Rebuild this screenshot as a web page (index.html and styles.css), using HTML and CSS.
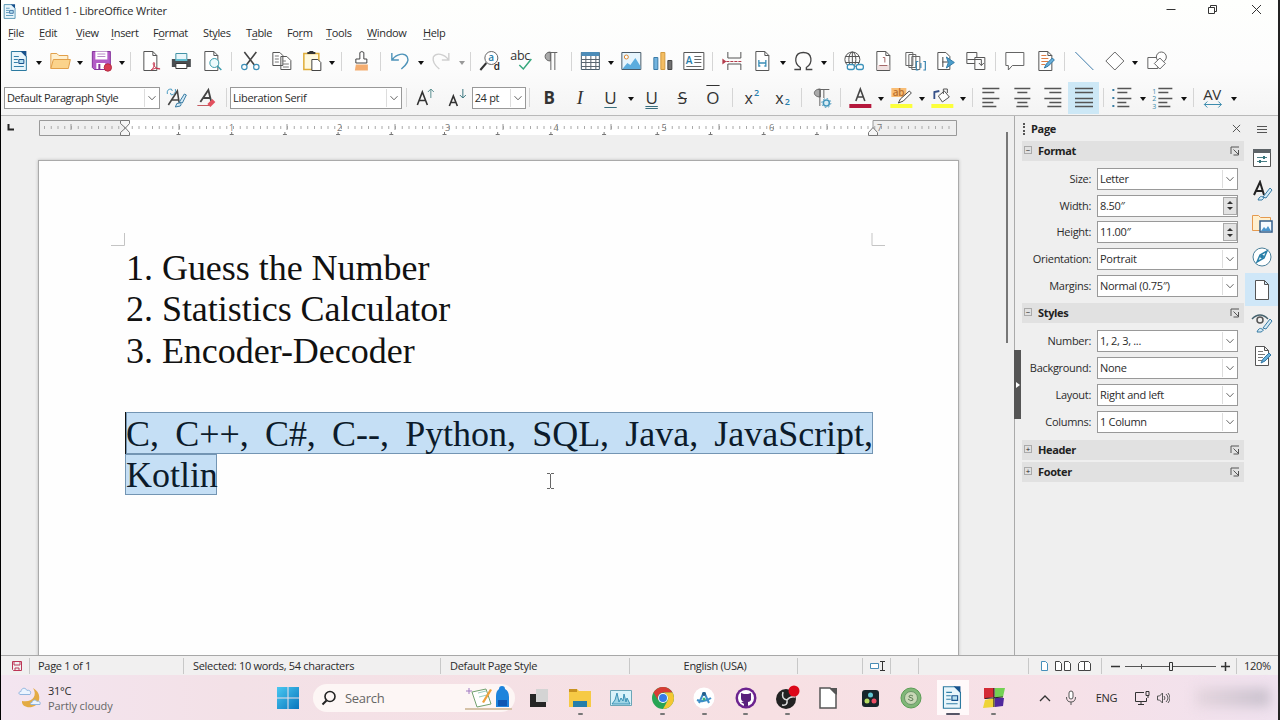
FILE: index.html
```html
<!DOCTYPE html>
<html lang="en">
<head>
<meta charset="utf-8">
<title>Untitled 1 - LibreOffice Writer</title>
<link rel="stylesheet" href="styles.css">
</head>
<body>
<svg class="defs" width="0" height="0">
  <symbol id="chev" viewBox="0 0 10 10"><path d="M1.500 3.200 5 6.800 8.500 3.200" fill="none" stroke="#666"/></symbol>
  <symbol id="launch" viewBox="0 0 10 10"><path d="M1 8V1h8M3.500 3.500 8 8M8.500 4v5h-5" fill="none" stroke="#555"/></symbol>
  <symbol id="page" viewBox="0 0 22 22"><path d="M4.500 1.500h9l4 4v15h-13zM13.500 1.500v4h4" fill="#fff" stroke="#555"/></symbol>
  <symbol id="writer" viewBox="0 0 22 22"><path d="M3 1.500h10l5 5v14H3z" fill="#e8f5fb" stroke="#2c7aa0"/><path d="M12 1h6v6z" fill="#17518c"/><path d="M5.500 6.500h5M5.500 9.500h4M5.500 12.500h4M5.500 16.500h10" stroke="#327fa8"/><path d="M10.500 9.500h5v4h-5z" fill="#b5dff0" stroke="#17518c"/></symbol>
  <symbol id="pen" viewBox="0 0 22 22"><path d="m10 18 2-4 6-6 2 2-6 6z" fill="#69afd9" stroke="#3077a5"/></symbol>
</svg>
<div class="app">
  <header class="chrome">
    <div class="title">
      <svg class="logo"><use href="#writer"/></svg><span class="t-title">Untitled 1 - LibreOffice Writer</span>
      <svg class="winbtns" viewBox="0 0 110 20"><g fill="none" stroke="#333"><path d="M6.500 9.500h9M48.500 7.500h6v6h-6zM50.500 7.500v-2h6v6h-2M92 5l9 9M101 5l-9 9"/></g></svg>
    </div>
    <nav class="menu"><span><u>F</u>ile</span><span><u>E</u>dit</span><span><u>V</u>iew</span><span><u>I</u>nsert</span><span>F<u>o</u>rmat</span><span>St<u>y</u>les</span><span>T<u>a</u>ble</span><span>Fo<u>r</u>m</span><span><u>T</u>ools</span><span><u>W</u>indow</span><span><u>H</u>elp</span></nav>
    <div class="bar one">
      <svg class="i"><use href="#writer"/></svg><b class="a"></b>
      <svg class="i" viewBox="0 0 22 22"><path d="M1.500 18.500v-15h6l2 2h9v4" fill="#fff0cf" stroke="#e2a04a"/><path d="M4 9.500h17l-2 9H1.500z" fill="#fbd38b" stroke="#e2a04a"/></svg><b class="a"></b>
      <svg class="i" viewBox="0 0 22 22"><path d="M2 1.500h18v18H4l-2-2z" fill="#b35cc6" stroke="#85339b"/><path d="M5 1.500h12v8H5z" fill="#fff"/><path d="M7 4h8M7 6.500h8" stroke="#b989c7"/><path d="M6 13h9v6H6z" fill="#fff"/><path d="M8 14h2v5H8z" fill="#85339b"/><circle cx="17.500" cy="17.500" r="3.700" fill="#d83c55" stroke="#b62c44"/></svg><b class="a"></b><i class="s"></i>
      <svg class="i" viewBox="0 0 22 22"><use href="#page"/><path d="M12 20c5-5 3-9 2-7s3 6 6 6-4-2-8 1" fill="#fff" stroke="#c6314b"/></svg>
      <svg class="i" viewBox="0 0 22 22"><path d="M5.500 9V3.500h11V9" fill="#e9f6fa" stroke="#4393a6"/><path d="M1.500 9h19v8h-19z" fill="#4b4f52"/><path d="M5.500 13.500h11v5h-11z" fill="#fff" stroke="#383838"/><path d="M5 9h12v2H5z" fill="#62bdd0"/></svg>
      <svg class="i" viewBox="0 0 22 22"><use href="#page"/><circle cx="14" cy="13" r="4.500" fill="#ecfafc" stroke="#3b9dad"/><path d="m17 16 4 4" stroke="#3b9dad" stroke-width="1.500"/></svg><i class="s"></i>
      <svg class="i" viewBox="0 0 22 22"><path d="m5 2 10 13M17 2 7 15" fill="none" stroke="#444" stroke-width="1.600"/><g fill="none" stroke="#3b8fb8" stroke-width="1.200"><circle cx="5" cy="17" r="2.700"/><circle cx="17" cy="17" r="2.700"/></g></svg>
      <svg class="i" viewBox="0 0 22 22"><g fill="#fff" stroke="#555"><path d="M2.500 2.500h7l3 3v10h-10zM10.500 6.500h6l4 4v9h-10z"/></g><path d="M4.500 6h4M4.500 9h4M4.500 12h4M12.500 11h3M12.500 14h6M12.500 17h6" stroke="#777"/></svg>
      <svg class="i" viewBox="0 0 22 22"><path d="M2.500 3.500h15v16h-15z" fill="#fff9df" stroke="#e0ad37" stroke-width="1.500"/><path d="M6 4h8V2h-2V1H8v1H6z" fill="#333"/><path d="M10.500 9.500h6l3 3v8h-9z" fill="#fff" stroke="#444"/></svg><b class="a"></b><i class="s"></i>
      <svg class="i" viewBox="0 0 22 22"><path d="M9.500 9V2.500q2-2 4 0V9h3v4h-11V9z" fill="#fff" stroke="#444"/><path d="M5.500 14.500h12v6h-13z" fill="#f4ad70"/></svg><i class="s"></i>
      <svg class="i" viewBox="0 0 22 22"><path d="M2.500 3v7h7M3 9.500C7 4 15 2 18 7c2 4-1 8-6 12" fill="none" stroke="#4e93b9" stroke-width="1.400"/></svg><b class="a"></b>
      <svg class="i" viewBox="0 0 22 22"><path d="M18.500 3v7h-7M18 9.500C14 4 6 2 3 7c-1 4 1 8 6 12" fill="none" stroke="#cfcfcf" stroke-width="1.400"/></svg><b class="a dim"></b><i class="s"></i>
      <svg class="i" viewBox="0 0 22 22"><circle cx="12" cy="8" r="6.500" fill="#fff" stroke="#666"/><path d="m7 13-6 7" stroke="#333" stroke-width="2"/><text x="9" y="11" class="g" fill="#277ca8">a</text><text x="14.500" y="20" class="g" fill="#222">d</text></svg>
      <svg class="i" viewBox="0 0 22 22"><text x="0" y="10" class="g abc">abc</text><path d="m9 15 4 4 8-10" fill="none" stroke="#36a77c" stroke-width="1.500"/></svg>
      <svg class="i" viewBox="0 0 22 22"><path d="M10 2C3 2 3 11 10 11z" fill="#aaa" stroke="#666"/><path d="M10.500 20V2.500M14.500 20V2.500M8 2.500h9" stroke="#666" fill="none"/></svg><i class="s"></i>
      <svg class="i" viewBox="0 0 22 22"><path d="M2 2.500h18v17H2z" fill="#fff" stroke="#465c6b"/><path d="M2 2h18v4H2z" fill="#4c8cb8"/><path d="M2 9.500h18M2 12.500h18M2 16.500h18M6.500 6v14M11.500 6v14M16.500 6v14" stroke="#5a6670"/></svg><b class="a"></b>
      <svg class="i" viewBox="0 0 22 22"><path d="M1.500 2.500h19v17h-19z" fill="#e6f5fd" stroke="#4a5c6a"/><circle cx="6" cy="7" r="2" fill="#fff" stroke="#dc8830"/><path d="m2 19 5-6 3 2 5-7 5 8v3z" fill="#5cadde"/></svg>
      <svg class="i" viewBox="0 0 22 22"><path d="M2.500 7.500h4v12h-4z" fill="#73b4df" stroke="#3b7ba7"/><path d="M9.500 2.500h4v17h-4z" fill="#f4bd62" stroke="#d29a3f"/><path d="M16.500 10.500h4v9h-4z" fill="#707070" stroke="#444"/></svg>
      <svg class="i" viewBox="0 0 22 22"><path d="M1.500 2.500h20v17h-20z" fill="#fff" stroke="#555"/><path d="M12 6.500h7M12 9.500h7M12 12.500h7M4 16.500h15" stroke="#666"/><text x="3.500" y="14" class="g" fill="#277ca8">A</text></svg><i class="s"></i>
      <svg class="i" viewBox="0 0 22 22"><path d="M6.500 2v6h13V2M6.500 20v-6h13v6" fill="none" stroke="#555"/><path d="M5 11.500h16" stroke="#b33c4b" stroke-dasharray="3 1"/><path d="m1 8.500 4 3-4 3z" fill="#b33c4b"/></svg>
      <svg class="i" viewBox="0 0 22 22"><use href="#page"/><path d="M7.500 10v6h1.500M14.500 10v6H13M7.500 13h7" fill="none" stroke="#3c8fb8" stroke-width="1.300"/></svg><b class="a"></b>
      <svg class="i" viewBox="0 0 22 22"><path d="M2 19.500h6v-2C1 13 2 2.500 11 2.500S21 13 14 17.500v2h6" fill="none" stroke="#444" stroke-width="1.300"/></svg><b class="a"></b><i class="s"></i>
      <svg class="i" viewBox="0 0 22 22"><g fill="none" stroke="#555"><circle cx="10" cy="9.500" r="7.500"/><ellipse cx="10" cy="9.500" rx="3.500" ry="7.500"/><path d="M3 6.500h14M3 12.500h14M10 2v15"/></g><g fill="#fff" stroke="#3b92bb" stroke-width="1.300"><rect x="5" y="14.500" width="7" height="5" rx="2"/><rect x="14" y="14.500" width="7" height="5" rx="2"/></g></svg>
      <svg class="i" viewBox="0 0 22 22"><use href="#page"/><path d="M5 15h12v5H5z" fill="#f0e1e1"/><path d="M10.500 7.500h2v5M7 15.500h8" fill="none" stroke="#a46969"/></svg>
      <svg class="i" viewBox="0 0 22 22"><g fill="#fff" stroke="#666"><path d="M2.500 2.500h7v13h-7zM5.500 4.500h7v13h-7zM8.500 6.500h8v13h-8z"/></g><path d="M15 11.500h-2v8.500h2M20 11.500h2v8.500h-2M17.500 13v5" fill="none" stroke="#3d87b1" stroke-width="1.200"/></svg>
      <svg class="i" viewBox="0 0 22 22"><path d="M3.500 2.500h8l4 4v13h-12z" fill="#fff" stroke="#555"/><path d="M8.500 7v10M8 12h7" stroke="#444"/><path d="m12 7 8 5.500-8 5.500 2-5.500z" fill="#4b9dcb" stroke="#347eaa"/></svg>
      <svg class="i" viewBox="0 0 22 22"><g fill="none" stroke="#555"><path d="M2.500 2.500h10v5M10.500 13.500h-8v-11M10.500 7.500h10v12h-10zM3 9.500h14v6M14.500 13l2.500 2.500 2.500-2.500"/></g></svg><i class="s"></i>
      <svg class="i" viewBox="0 0 22 22"><path d="M2.500 2.500h18v13H9l-4 4.500v-4.500H2.500z" fill="#fff" stroke="#666"/></svg>
      <svg class="i" viewBox="0 0 22 22"><use href="#page"/><path d="M7 5.500h5M7 8.500h7M7 11.500h7M7 14.500h4" stroke="#dd7d46"/><use href="#pen"/></svg><i class="s"></i>
      <svg class="i" viewBox="0 0 22 22"><path d="m2 2 18 18" stroke="#407cab"/></svg>
      <svg class="i" viewBox="0 0 22 22"><path d="m10.500 2 9 9-9 9-9-9z" fill="#fff" stroke="#666"/></svg><b class="a"></b>
      <svg class="i" viewBox="0 0 22 22"><g fill="#fff" stroke="#666"><path d="M2.500 7.500h10v11h-10z"/><circle cx="16" cy="7" r="5"/><path d="m14.500 8 5.500 5.500-5.500 5.500-5.500-5.500z"/></g></svg>
    </div>
    <div class="bar two">
      <div class="combo w1"><span class="t-ps">Default Paragraph Style</span><svg><use href="#chev"/></svg></div>
      <svg class="i" viewBox="0 0 22 22"><path d="M2 7q-1-5 4-5l1 2M10 2q1 5-4 6L5 6" fill="none" stroke="#4d9dc3"/><path d="m3 18 9-14 2 13M6 13h7" fill="none" stroke="#444" stroke-width="1.600"/><path d="m14 15 5-8 2 1-4 8zM10 20q1-5 4-4 3 0 1 3z" fill="#d5eaf6" stroke="#397ca4"/></svg>
      <svg class="i" viewBox="0 0 22 22"><path d="m4 15 8-12 3 12M7 11h7" fill="none" stroke="#444" stroke-width="1.800"/><path d="M1 18.500h13" stroke="#c45d63"/><path d="m11 17 5-5 3 3-5 5z" fill="#e2505e"/></svg><i class="s"></i>
      <div class="combo w2"><span class="t-ls">Liberation Serif</span><svg><use href="#chev"/></svg></div><i class="s"></i>
      <svg class="i" viewBox="0 0 22 22"><path d="m3 18 5-13 5 13M5 13.500h6" fill="none" stroke="#333" stroke-width="1.600"/><path d="M16.500 11V2M13.500 5l3-3 3 3" fill="none" stroke="#5a8f90"/></svg>
      <svg class="i" viewBox="0 0 22 22"><path d="m4 19 4-10 4 10M5.500 15.500h5" fill="none" stroke="#333" stroke-width="1.600"/><path d="M17.500 2v9M14.500 8l3 3 3-3" fill="none" stroke="#3c7880"/></svg>
      <div class="combo w3"><span class="t-pt">24 pt</span><svg><use href="#chev"/></svg></div><i class="s"></i>
      <span class="i L"><strong>B</strong></span><span class="i L it">I</span><span class="i L ul">U</span><b class="a"></b><span class="i L dul">U</span><span class="i L st">S</span><span class="i L ol">O</span><i class="s"></i>
      <span class="i L x">x<sup>2</sup></span><span class="i L x">x<sub>2</sub></span><i class="s"></i>
      <svg class="i" viewBox="0 0 22 22"><path d="M10 2C2 2 2 10 10 10z" fill="#aaa" stroke="#666"/><path d="M9.500 19V2.500M13.500 11V2.500M8 2.500h11" stroke="#666"/><circle cx="16" cy="16" r="3" fill="#d8edf5" stroke="#4496bc" stroke-width="1.500"/><circle cx="16" cy="16" r="4.500" fill="none" stroke="#4496bc" stroke-dasharray="1.500 2"/></svg><i class="s"></i>
      <svg class="i" viewBox="0 0 22 22"><path d="M0 17h22v4H0z" fill="#b5173c"/><path d="m6.500 14 4.500-12 4.500 12M8 10h6" fill="none" stroke="#444" stroke-width="1.600"/></svg><b class="a"></b>
      <svg class="i" viewBox="0 0 22 22"><path d="M0 17h22v4H0z" fill="#fcff3b"/><path d="M1 1h15v9H1z" fill="#f9bd75"/><text x="2.500" y="9" class="g" fill="#b8702f">ab</text><path d="m8 16 2-4 9-8 2 2-8 8z" fill="#fff" stroke="#444"/></svg><b class="a"></b>
      <svg class="i" viewBox="0 0 22 22"><path d="M0 17h22v4H0z" fill="#fcff3b"/><path d="M3 12V5l5-1" fill="none" stroke="#344f88" stroke-width="1.800"/><path d="m7 9 6-5 5 6-7 5z" fill="#fff" stroke="#555"/><path d="M12 7V2h4v4" fill="none" stroke="#555"/></svg><b class="a"></b><i class="s"></i>
      <svg class="i" viewBox="0 0 22 22"><path class="ln" d="M2 1.500h17M2 5.500h12M2 11.500h17M2 15.500h11M2 19.500h14"/></svg>
      <svg class="i" viewBox="0 0 22 22"><path class="ln" d="M3 1.500h16M6 5.500h10M3 11.500h16M6 15.500h10M5 19.500h12"/></svg>
      <svg class="i" viewBox="0 0 22 22"><path class="ln" d="M2 1.500h17M7 5.500h12M2 11.500h17M7 15.500h12M5 19.500h14"/></svg>
      <span class="i on"><svg viewBox="0 0 22 22"><path class="ln" d="M2 1.500h18M2 5.500h18M2 11.500h18M2 15.500h18M2 19.500h18"/></svg></span><i class="s"></i>
      <svg class="i" viewBox="0 0 22 22"><path class="ln" d="M6 1.500h14M6 5.500h10M6 11.500h14M6 15.500h9M6 19.500h12"/><path d="M1 2h2v2H1zM1 10h2v2H1zM1 18h2v2H1z" fill="#3a7ea5"/></svg><b class="a"></b>
      <svg class="i" viewBox="0 0 22 22"><path class="ln" d="M6 1.500h14M6 5.500h10M6 11.500h14M6 15.500h9M6 19.500h12"/><g class="tiny" fill="#3a8bac"><text x="0" y="6.500">1</text><text x="0" y="14">2</text><text x="0" y="21.500">3</text></g></svg><b class="a"></b><i class="s"></i>
      <svg class="i" viewBox="0 0 22 22"><text x="1" y="13" class="av">AV</text><path d="M2 17.500h17M5 14.500l-3 3 3 3M16 14.500l3 3-3 3" fill="none" stroke="#3d8cae"/></svg><b class="a"></b>
    </div>
  </header>
  <main class="work">
    <section class="docpane">
      <svg class="ruler" width="1014" height="44" viewBox="0 0 1014 44">
        <path d="M8.500 8v5.500H14" fill="none" stroke="#222" stroke-width="2"/>
        <path d="M125 4h748v15H125z" fill="#fff"/>
        <path d="M39.500 4.500h85v15h-85zM873 4.500h83.500v15H873z" fill="#efefef" stroke="#999"/>
        <path d="M44 11.500H953" stroke="#aaa" stroke-width="3" stroke-dasharray="1 5.750"/>
        <path d="M70.500 11H920" stroke="#999" stroke-width="6" stroke-dasharray="1 107"/>
        <g class="nums"><text x="231.500" y="15">1</text><text x="339.500" y="15">2</text><text x="447.500" y="15">3</text><text x="556" y="15">4</text><text x="664" y="15">5</text><text x="771.500" y="15">6</text><text x="879.500" y="15">7</text></g>
        <path d="M176.500 18.500H870" stroke="#777" stroke-dasharray="4 49.200"/><path d="M178 17H870" stroke="#777" stroke-width="2" stroke-dasharray="1 52.200"/>
        <path d="M120.500 4.500h9v3l-4 4.500-5-4.500zM120.500 19.500h9v-3L125.500 12l-5 4.500z" fill="#f6f6f6" stroke="#777"/>
        <path d="M868.500 19.500h9v-3l-4.500-5-4.500 5z" fill="#f6f6f6" stroke="#777"/>
      </svg>
      <article class="sheet">
        <svg class="corners" viewBox="0 0 774 13"><path d="M0 12.500h13.500V0M774 12.500h-13V0" fill="none" stroke="#c4c4c4"/></svg>
        <p>1. Guess the Number</p><p>2. Statistics Calculator</p><p>3. Encoder-Decoder</p><p>&nbsp;</p>
        <p class="sel full">C, C++, C#, C--, Python, SQL, Java, JavaScript,</p><p class="sel last">Kotlin</p>
        <svg class="ibeam" viewBox="0 0 9 16"><path d="M1 .5h3M5 .5h3M1 15.500h3M5 15.500h3M4.500 1v14" stroke="#666" fill="none"/></svg>
      </article>
      <i class="scroll"></i>
    </section>
    <i class="grip"></i>
    <aside class="side">
      <div class="shead"><i class="dots"></i><strong>Page</strong><svg viewBox="0 0 10 10"><path d="m1 1 8 8M9 1 1 9" stroke="#444" fill="none"/></svg></div>
      <h3 class="sec"><i>−</i><span>Format</span><svg><use href="#launch"/></svg></h3>
      <div class="rows">
        <label>Size:</label><div class="combo"><span>Letter</span><svg><use href="#chev"/></svg></div>
        <label>Width:</label><div class="combo"><span>8.50″</span><em class="spin"></em></div>
        <label>Height:</label><div class="combo"><span>11.00″</span><em class="spin"></em></div>
        <label>Orientation:</label><div class="combo"><span>Portrait</span><svg><use href="#chev"/></svg></div>
        <label>Margins:</label><div class="combo"><span>Normal (0.75″)</span><svg><use href="#chev"/></svg></div>
      </div>
      <h3 class="sec"><i>−</i><span>Styles</span><svg><use href="#launch"/></svg></h3>
      <div class="rows r2">
        <label>Number:</label><div class="combo"><span>1, 2, 3, ...</span><svg><use href="#chev"/></svg></div>
        <label>Background:</label><div class="combo"><span>None</span><svg><use href="#chev"/></svg></div>
        <label>Layout:</label><div class="combo"><span>Right and left</span><svg><use href="#chev"/></svg></div>
        <label>Columns:</label><div class="combo"><span>1 Column</span><svg><use href="#chev"/></svg></div>
      </div>
      <h3 class="sec"><i>+</i><span>Header</span><svg><use href="#launch"/></svg></h3>
      <h3 class="sec foot"><i>+</i><span>Footer</span><svg><use href="#launch"/></svg></h3>
    </aside>
    <nav class="tabs">
      <span><svg viewBox="0 0 22 22"><path d="M6 8.500h10M6 11.500h10M6 14.500h10" stroke="#555"/></svg></span>
      <span><svg viewBox="0 0 22 22"><path d="M2.500 2.500h17v17h-17z" fill="#fff" stroke="#555"/><path d="M2 2h18v4H2z" fill="#5e6468"/><path d="M6 10.500h10M6 14.500h10" stroke="#4b7f86"/><path d="M12 9h2v3h-2zM8 13h2v3H8z" fill="#37757c"/></svg></span>
      <span><svg viewBox="0 0 22 22"><path d="m3 15 6-13 4 13M5 11h7" fill="none" stroke="#222" stroke-width="2"/><path d="m12 17 7-9 2 2-6 8zM7 20q2-5 5-3 2 1-1 3z" fill="#d5eaf6" stroke="#397ca4"/></svg></span>
      <span><svg viewBox="0 0 22 22"><path d="M1.500 17.500v-15h6l2 2h10v13z" fill="#fff0cf" stroke="#e59a4f"/><path d="M9 8h12v11H9z" fill="#f7fbff" stroke="#355f8b" stroke-width="1.500"/><path d="m10 18 3-4 2 2 2-3 3 5z" fill="#4b96ce"/></svg></span>
      <span><svg viewBox="0 0 22 22"><circle cx="11" cy="11" r="9" fill="#fff" stroke="#4a7f99"/><path d="m6 16 3-7 7-4-3 7z" fill="#fff" stroke="#287fa8" stroke-width="1.500"/><circle cx="11" cy="10.500" r="2" fill="#287fa8"/></svg></span>
      <span class="cur"><svg><use href="#page"/></svg></span>
      <span><svg viewBox="0 0 22 22"><path d="M1 7q8-8 16 0" fill="none" stroke="#44616d" stroke-width="1.500"/><circle cx="9" cy="8" r="3" fill="none" stroke="#555" stroke-width="1.500"/><path d="m12 16 7-9 2 2-6 8zM6 20q2-5 5-3 3 1-1 3z" fill="#d5eaf6" stroke="#397ca4"/></svg></span>
      <span><svg viewBox="0 0 22 22"><use href="#page"/><path d="M7 6.500h5M7 9.500h7M7 12.500h5M7 15.500h4" stroke="#777"/><use href="#pen"/></svg></span>
    </nav>
  </main>
  <footer class="status">
    <span class="c1"><svg viewBox="0 0 12 12"><path d="M1.500 1.500h9v9h-8l-1-1zM3 2v3h6V2M4 11V8h4v3" fill="none" stroke="#bc3656"/></svg></span>
    <span class="c2">Page 1 of 1</span><span class="c3">Selected: 10 words, 54 characters</span><span class="c4">Default Page Style</span><span class="c5">English (USA)</span><span class="c6"></span>
    <span class="c7"><svg viewBox="0 0 18 12"><path d="M1.500 3.500h8v5h-8z" fill="#fff" stroke="#498cb5"/><path d="M11 1.500h5M11 10.500h5M13.500 2v9" stroke="#333" fill="none"/></svg></span><span class="c8"></span><span class="c9"></span>
    <span class="c10"><svg viewBox="0 0 54 12"><g fill="#fff" stroke="#444"><path stroke="#468fba" d="M1.500 1.500h4l2 2v7h-6z"/><path d="M15.500 1.500h4l2 2v7h-6zM24.500 1.500h4l2 2v7h-6zM38.500 10.500v-7l2-2h4v9zM44.500 1.500h4l2 2v7h-6z"/></g></svg></span>
    <span class="c11"><svg viewBox="0 0 124 12"><path d="M2 6.500h9M112 6.500h9M116.500 2v9" stroke="#333" stroke-width="1.500"/><path d="M16 6.500h91M32.500 4v5" stroke="#555"/><path d="M60.500 2.500h3v8h-3z" fill="#eee" stroke="#333"/></svg></span><span class="c12">120%</span>
  </footer>
  <footer class="task">
    <div class="weather"><svg viewBox="0 0 24 24"><path d="M15 2c5 8-1 15-11 13-1 8 15 9 17-1 1-5-1-9-6-12" fill="#e3ab43"/><path d="M2 8.500h10c2-3-1-5-3-4-2-4-6-2-6 1-2 0-3 2-1 3M13 18.500h9c1-3-2-4-3-3-2-3-5-1-5 1-2 0-2 1-1 2" fill="#eaf4ff" stroke="#90b5df"/></svg><div><span>31°C</span><span class="cloudy">Partly cloudy</span></div></div>
    <svg class="start" viewBox="0 0 22 22"><defs><linearGradient id="w" x1="0" y1="0" x2="1" y2="1"><stop stop-color="#4ac8f1"/><stop offset="1" stop-color="#0875bd"/></linearGradient></defs><path d="M0 0h10.500v10.500H0zM11.500 0H22v10.500H11.500zM0 11.500h10.500V22H0zM11.500 11.500H22V22H11.500z" fill="url(#w)"/></svg>
    <div class="search"><svg viewBox="0 0 16 16"><circle cx="9" cy="6.500" r="5" fill="none" stroke="#222" stroke-width="1.600"/><path d="m5.500 10.500-4 4" stroke="#222" stroke-width="2"/></svg><span>Search</span>
      <svg class="decor" viewBox="0 0 50 28"><path d="M0 24h47v2H0z" fill="#d6c2a8"/><path d="m7 8 14-3 5 15-14 3z" fill="#fff" stroke="#72a16f"/><path d="m13 9 8-2M14 13l8-2" stroke="#9cb"/><path d="m17 18 8-13 2 1-8 13z" fill="#efa13c"/><path d="M4 4v6M1 7h6" stroke="#a17ac2"/><path d="M34 5q0-3 3-3t3 3q4 2 4 8v10H31V12q0-5 3-7z" fill="#1d83dc"/><path d="M33 16h9v6h-9z" fill="#0e57b3"/></svg></div>
    <div class="apps">
      <span><svg viewBox="0 0 22 22"><path d="M8 2h12v13H8z" fill="#d4d4d4"/><path d="M2 7h6v8h10v5H2z" fill="#262626"/></svg></span>
      <span class="run"><svg viewBox="0 0 22 22"><path d="M0 2h8l2 2h12v16H0z" fill="#f6ca45"/><path d="M0 2h8v3H0z" fill="#c89220"/><path d="M4 14h14v6H4z" fill="#257eaa"/></svg></span>
      <span><svg viewBox="0 0 22 22"><path d="M.5 3.500h21v15H.5z" fill="#d9f3fa" stroke="#6ba5b7"/><path d="M2 17l3-4 2-7 2 9 2-4 2 3 1-7 2 8 1-4 3 6z" fill="#9ed4e5" stroke="#3a91b5"/></svg></span>
      <span class="run"><svg viewBox="0 0 22 22"><circle cx="11" cy="11" r="11" fill="#27a454"/><path d="M1.500 5.500A11 11 0 0 1 20.500 5.500H11A5.500 5.500 0 0 0 6 13z" fill="#d83c35"/><path d="M20.500 5.500A11 11 0 0 1 11 22l5-9q1-5-4-7.500z" fill="#f5c632"/><circle cx="11" cy="11" r="5" fill="#fff"/><circle cx="11" cy="11" r="4" fill="#367be8"/></svg></span>
      <span class="run"><svg viewBox="0 0 22 22"><circle cx="11" cy="11" r="10.500" fill="#fff"/><path d="m6 16 4.500-10h1L16 16M4 13q7 3 14-2" fill="none" stroke="#3d8dc7" stroke-width="2"/><circle cx="11" cy="7" r="2" fill="#255e8a"/><circle cx="11" cy="12" r="1.500" fill="#38b579"/></svg></span>
      <span class="run"><svg viewBox="0 0 22 22"><circle cx="11" cy="11" r="10.500" fill="#6c238f"/><circle cx="11" cy="11" r="8" fill="#fff"/><path d="M6 6l3 1h4l3-1v7q-1 2-3 2v4H9v-2l-3-2 3 0V15q-3-1-3-4z" fill="#59207c"/></svg></span>
      <span class="run"><svg viewBox="0 0 22 22"><circle cx="10" cy="12" r="10" fill="#222"/><path d="M7 5q-2 7 4 8M19 10q-5-1-8 3M6 18q6 1 5-5" fill="none" stroke="#ddd" stroke-width="1.500"/><circle cx="18" cy="4" r="5.500" fill="#dc0719"/></svg></span>
      <span><svg viewBox="0 0 22 22"><path d="M3 1h10l6 6v14H3z" fill="#fff" stroke="#555" stroke-width="1.500"/><path d="M13 1h7v7z" fill="#555"/></svg></span>
      <span><svg viewBox="0 0 22 22"><rect x="3" y="3" width="17" height="17" rx="3" fill="#17252b"/><circle cx="11.500" cy="8" r="2.500" fill="#61c5d2"/><circle cx="8" cy="14" r="2.500" fill="#b7dc62"/><circle cx="15" cy="14" r="2.500" fill="#ec4d64"/></svg></span>
      <span><svg viewBox="0 0 22 22"><circle cx="11" cy="11" r="10" fill="#81b778" stroke="#5a9d55"/><circle cx="11" cy="11" r="6.500" fill="#c9d8b7" stroke="#6b9568"/><path d="M13 9q-4-2-4 1 5 1 4 3-2 2-5-1" fill="none" stroke="#607e59"/></svg></span>
      <span class="active"><svg class="big"><use href="#writer"/></svg></span>
      <span class="run"><svg viewBox="0 0 22 22"><path d="M1 1h10v9l-10 2z" fill="#d42b35"/><path d="M12 1h10l-2 9h-8z" fill="#73d153"/><path d="m2 13 9-2v9L0 21z" fill="#eed438"/><path d="M12 11h9l-1 8-8 1z" fill="#50279c"/><path d="M11 1v19M2 11.500 20 10" stroke="#252525" stroke-width="1.200"/></svg></span>
    </div>
    <div class="tray"><svg viewBox="0 0 12 12"><path d="m1 9 5-5 5 5" fill="none" stroke="#333" stroke-width="1.300"/></svg><svg class="mic" viewBox="0 0 12 16"><rect x="4" y="1" width="4" height="8" rx="2" fill="#fff" stroke="#555"/><path d="M1.500 7q0 5 4.500 5t4.500-5M6 12v3" fill="none" stroke="#555"/></svg><span>ENG</span><svg class="net" viewBox="0 0 16 16"><path d="M10 2.500H1.500v9h11V8M4 14.500h6M7 12v2M14 8V5M12 1.500h3v4h-3z" fill="none" stroke="#333"/></svg><svg class="vol" viewBox="0 0 14 14"><path d="M1.500 5h2l3-3v10l-3-3h-2zM8 5q2 2 0 4M10 3q4 4 0 8M12 2q4 5 0 10" fill="none" stroke="#555"/></svg><i class="clock"></i></div>
  </footer>
</div>
</body>
</html>
```
FILE: styles.css
```css
* { box-sizing: border-box; }
body { margin: 0; width: 1280px; height: 720px; overflow: hidden; background: #efefef; color: #2b2b2b; font: 11px/14px "Open Sans", "Noto Sans", sans-serif; letter-spacing: -.3px; }
.defs { position: absolute; }
.app { display: flex; flex-direction: column; height: 720px; border-left: 1px solid #000; border-right: 2px solid #222; }
.chrome { height: 116px; flex: none; background: linear-gradient(#fefffd 0, #fcfcfc 60%, #f4f4f4 100%); border-bottom: 1px solid #b9b9b9; }
.title { height: 22px; display: flex; align-items: center; padding-left: 1px; }
.t-title { letter-spacing: -.18px; }
.logo { width: 16px; height: 17px; margin-right: 4px; }
.winbtns { width: 110px; height: 20px; margin: -2px 8px 0 auto; }
.menu { height: 22px; display: grid; grid-template-columns: 31px 37px 35px 42px 50px 43px 41px 39px 41px 56px 50px; align-items: center; padding-left: 7px; letter-spacing: -.35px; }
.menu u { text-underline-offset: 2px; text-decoration-color: #777; }
.bar { display: flex; align-items: center; padding-left: 2px; }
.one { height: 34px; padding-left: 2.500px; }
.two { height: 37px; padding-left: 3px; margin-top: 1px; }
.bar > .i { width: 30.7px; height: 22px; flex: none; overflow: visible; }
.a { width: 10.4px; flex: none; display: flex; justify-content: center; }
.a::after { content: ""; border: 3px solid transparent; border-top: 4px solid #111; border-bottom: 0; margin-top: 3px; }
.a.dim::after { border-top-color: #999; }
.s { width: 8.2px; height: 19px; flex: none; display: flex; justify-content: center; }
.s::after { content: ""; width: 1px; background: #d5d5d5; }
.g { font-size: 10px; font-weight: 600; }
.abc { font-size: 12.5px; fill: #333; font-weight: 400; }
.tiny { font-size: 7px; }
.av { font-size: 15px; fill: #333; letter-spacing: -.5px; }
.ln { stroke: #555; fill: none; stroke-width: 1.300; }
.combo { height: 22px; display: flex; align-items: center; background: #fff; border: 1px solid #999; padding-left: 2px; white-space: nowrap; }
.combo svg { width: 15px; height: 18px; padding: 0 2px; border-left: 1px solid #ddd; margin-left: auto; flex: none; }
.w1 { width: 156px; margin-right: 1.300px; }
.t-ps { letter-spacing: -.42px; }
.w2 { width: 172px; margin-left: -.8px; }
.w3 { width: 54px; }
.L { display: flex; justify-content: center; align-items: center; font-size: 17px; color: #333; letter-spacing: 0; }
.it { font-family: "Liberation Serif", serif; font-style: italic; font-size: 19px; }
.ul { text-decoration: underline; text-decoration-color: #386d7d; text-underline-offset: 3px; text-decoration-thickness: 1px; }
.dul { text-decoration: underline double #386d7d; text-underline-offset: 2px; text-decoration-thickness: 1px; }
.st { text-decoration: line-through; text-decoration-thickness: 1px; }
.ol { text-decoration: overline; text-decoration-thickness: 1px; }
.x { font-size: 16px; }
.x sup, .x sub { font-size: 9px; color: #287fae; margin-left: 1px; font-weight: 600; }
.x sup { margin-top: -9px; }
.x sub { margin-top: 9px; }
.bar > .on { height: 32px; background: #cde8f6; display: flex; align-items: center; justify-content: center; }
.on svg { width: 22px; height: 22px; }
.work { height: 539px; flex: none; display: grid; grid-template-columns: 1014px 6px 223px 1fr; }
.docpane { position: relative; overflow: hidden; background: #efefef; border-right: 1px solid #aaa; }
.ruler { display: block; margin-left: -1px; }
.nums { font-size: 9px; fill: #777; text-anchor: middle; }
.sheet { margin-left: 37px; width: 921px; height: 500px; padding: 72px 86px 0; background: #fefefe; border: 1px solid #aaa; box-shadow: 0 0 3px #bbb; font: 36px/41.4px "Liberation Serif", serif; letter-spacing: -.03px; color: #111; position: relative; }
.sheet p { margin: 0; padding-left: 1px; white-space: nowrap; width: 748px; }
.corners { display: block; width: 774px; height: 13px; margin: 0 0 2px -14px; }
.sheet .sel { background: #c5dff5; color: #0c1b2b; box-shadow: inset 0 0 0 1px #7395b3; height: 41.4px; padding-top: 1.400px; }
.sheet .full { text-align: justify; text-align-last: justify; border-left: 1px solid #111; padding-left: 0; margin-top: -1.400px; }
.sheet .last { width: 92px; }
.ibeam { position: absolute; left: 507px; top: 312px; width: 9px; height: 16px; }
.scroll { position: absolute; left: 1005px; top: 16px; width: 2px; height: 211px; background: #777; }
.grip { height: 69px; margin: 234px 0 0 -1px; background: #555; display: flex; align-items: center; justify-content: center; position: relative; }
.grip::after { content: ""; border: 3px solid transparent; border-left: 4px solid #fff; border-right: 0; }
.side { padding-left: 1px; }
.shead { height: 25px; display: flex; align-items: center; padding: 0 3px 0 1px; color: #222; }
.dots { height: 12px; border-left: 2px dotted #555; margin-right: 6px; }
.shead svg { width: 9px; height: 9px; margin-left: auto; }
.sec { height: 20px; margin: 0; display: flex; align-items: center; background: #e1e1e1; font: 700 11px/14px "Open Sans", sans-serif; letter-spacing: -.35px; padding: 0 4px 0 2px; color: #222; }
.sec i { width: 8px; height: 8px; border: 1px solid #aaa; font: 8px/5px "Open Sans", sans-serif; letter-spacing: 0; margin: -2px 6px 0 0; text-align: center; }
.sec svg { width: 10px; height: 10px; margin-left: auto; }
.rows { height: 142px; padding: 7px 6px 0 0; display: grid; grid-template-columns: 68px 141px; column-gap: 6px; justify-content: end; grid-auto-rows: 26.7px; align-items: start; text-align: right; }
.rows label { line-height: 21px; white-space: nowrap; }
.rows .combo { text-align: left; }
.r2 { height: 117px; grid-auto-rows: 27.1px; }
.spin { margin-left: auto; width: 14px; height: 18px; font-size: 0; background: #e3e3e3; border: 1px solid #aaa; display: flex; flex-direction: column; align-items: center; justify-content: space-evenly; }
.spin::before, .spin::after { content: ""; border: 3px solid transparent; border-top: 0; border-bottom: 3px solid #333; }
.spin::after { border-top: 3px solid #333; border-bottom: 0; }
.foot { margin-top: 2px; }
.tabs { display: flex; flex-direction: column; padding-left: 1px; }
.tabs span { height: 33px; display: flex; justify-content: center; align-items: center; }
.tabs span:first-child { height: 25px; }
.tabs svg { width: 22px; height: 22px; }
.tabs .cur { background: #cfe7f8; }
.status { height: 20px; flex: none; border-top: 1px solid #a8a8a8; background: #f1f0f0; display: grid; grid-template-columns: 29px 154px 257px 189px 168px 65px 28px 28px 110px 73px 135px 1fr; align-items: center; white-space: nowrap; }
.status span { height: 16px; line-height: 16px; border-right: 1px solid #c8c8c8; margin-top: 1px; display: flex; align-items: center; }
.status span:last-child { border: 0; padding-left: 7px; }
.c1 svg { width: 12px; height: 12px; margin-left: 10px; }
.status .c2 { padding-left: 8px; }
.status .c3 { padding-left: 9px; }
.status .c4 { padding-left: 9px; }
.status .c5 { justify-content: center; padding-left: 3px; }
.c7 svg { width: 18px; height: 12px; margin-left: 6px; }
.c10 svg { width: 54px; height: 12px; margin-left: 11px; }
.c11 svg { width: 124px; height: 12px; margin-left: 7px; }
.task { flex: 1; display: flex; align-items: center; background: linear-gradient(90deg, #f3e5f0 0, #f3e1e7 18%, #f7e0e3 60%, #f6e1e8 84%, #f0e2ef 100%); }
.weather { width: 276px; display: flex; align-items: center; padding-left: 17px; }
.weather svg { width: 24px; height: 24px; margin-right: 6px; }
.weather span { display: block; line-height: 15px; }
.weather .cloudy { color: #666; letter-spacing: -.1px; }
.start { width: 22px; height: 22px; }
.search { width: 202px; height: 28px; margin: 0 3px 0 14px; border-radius: 14px; background: #fdf6f5; display: flex; align-items: center; padding-left: 8px; font-size: 13px; color: #666; }
.search svg { width: 16px; height: 16px; margin-right: 8px; }
.search .decor { width: 50px; height: 28px; margin: 0 0 0 auto; }
.apps { display: flex; }
.apps span { width: 41.4px; height: 45px; display: flex; align-items: center; justify-content: center; position: relative; }
.apps svg { width: 22px; height: 22px; overflow: visible; }
.apps svg.big { width: 25px; height: 25px; }
.apps .active { background: linear-gradient(#fff9fa, #fff9fa) center / 32px 35px no-repeat; }
.run::after, .active::after { content: ""; position: absolute; bottom: 5px; width: 5px; height: 2px; border-radius: 1px; background: #777; }
.active::after { width: 14px; background: #556; }
.tray { flex: 1; display: flex; align-items: center; padding-left: 24px; }
.tray svg { width: 12px; height: 12px; }
.tray .mic { height: 16px; margin: 0 19px 0 14px; }
.tray .net { width: 16px; height: 16px; margin: 0 6px 0 17px; }
.tray .vol { width: 14px; height: 14px; }
.clock { width: 74px; height: 19px; margin-left: 26px; background: linear-gradient(90deg, #e4d5de, #c9c1cd); filter: blur(6px); }
```
